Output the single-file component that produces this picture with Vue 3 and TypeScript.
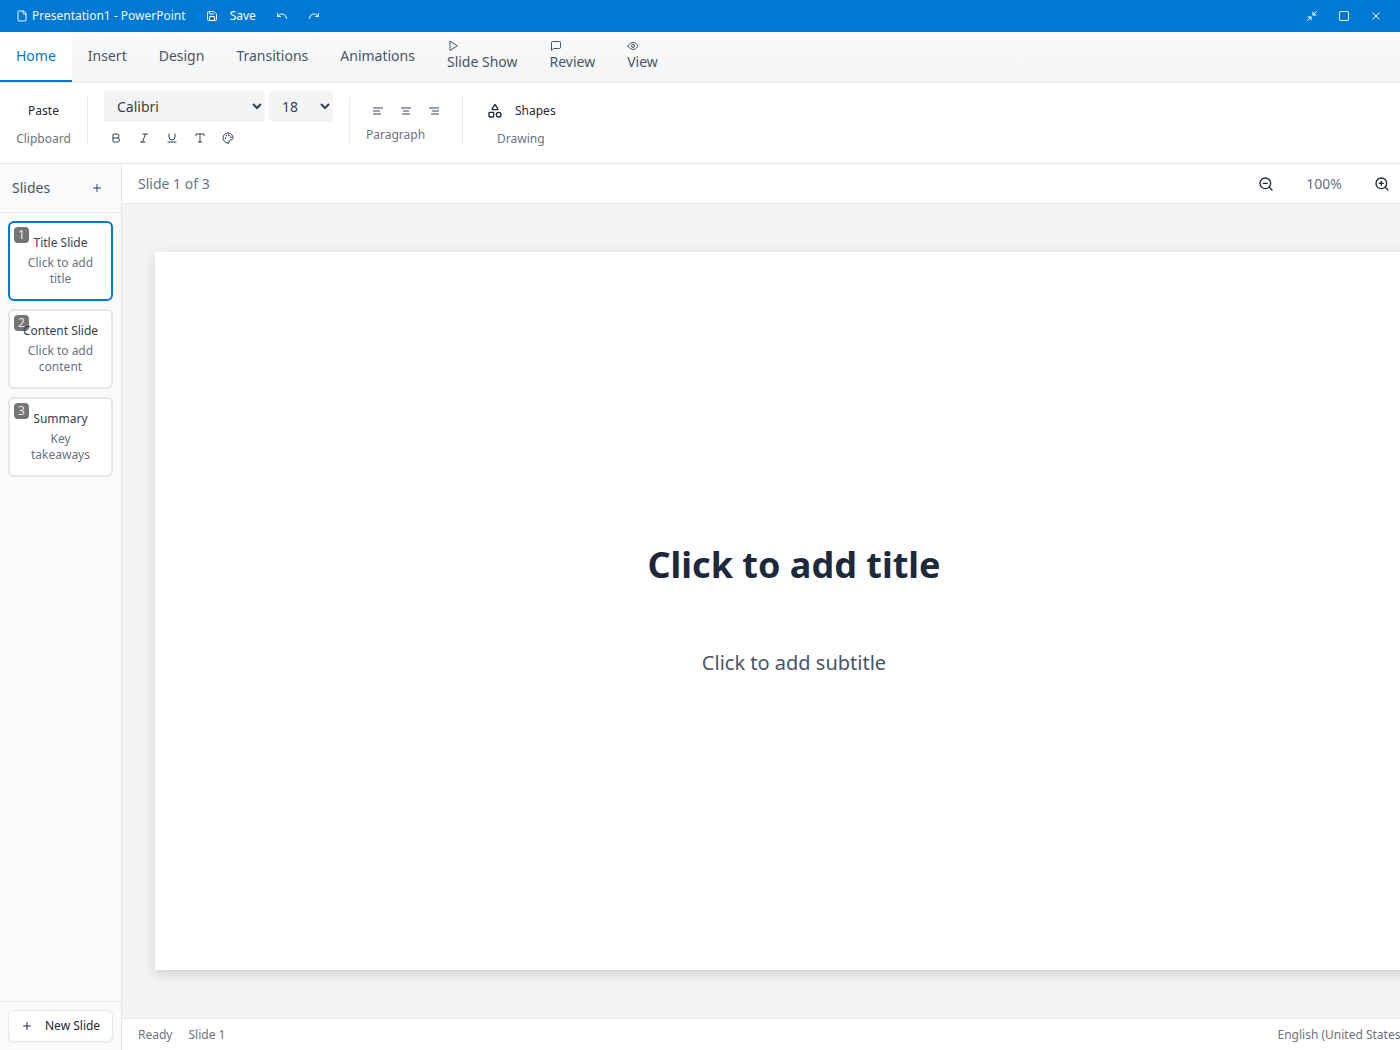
<template>
  <div class="app">
    <header class="titlebar">
      <div class="title-left">
        <span class="doc-title">
          <svg class="ic" viewBox="0 0 24 24"><path d="M15 2H6a2 2 0 0 0-2 2v16a2 2 0 0 0 2 2h12a2 2 0 0 0 2-2V7z" /><path d="M14 2v4a2 2 0 0 0 2 2h4" /></svg>
          <span class="lift">Presentation1 - PowerPoint</span>
        </span>
        <button class="tb-btn save">
          <svg class="ic" viewBox="0 0 24 24"><path d="M15.2 3a2 2 0 0 1 1.4.6l3.8 3.8a2 2 0 0 1 .6 1.4V19a2 2 0 0 1-2 2H5a2 2 0 0 1-2-2V5a2 2 0 0 1 2-2z" /><path d="M17 21v-7a1 1 0 0 0-1-1H8a1 1 0 0 0-1 1v7" /><path d="M7 3v4a1 1 0 0 0 1 1h7" /></svg>
          <span class="lift">Save</span>
        </button>
        <button class="tb-btn">
          <svg class="ic" viewBox="0 0 24 24"><path d="M3 7v6h6" /><path d="M21 17a9 9 0 0 0-9-9 9 9 0 0 0-6 2.3L3 13" /></svg>
        </button>
        <button class="tb-btn">
          <svg class="ic" viewBox="0 0 24 24"><path d="M21 7v6h-6" /><path d="M3 17a9 9 0 0 1 9-9 9 9 0 0 1 6 2.3l3 2.7" /></svg>
        </button>
      </div>
      <div class="title-right">
        <button class="win-btn">
          <svg class="ic" viewBox="0 0 24 24"><path d="m14 10 7-7" /><path d="M20 10h-6V4" /><path d="m3 21 7-7" /><path d="M4 14h6v6" /></svg>
        </button>
        <button class="win-btn">
          <svg class="ic" viewBox="0 0 24 24"><rect x="3" y="3" width="18" height="18" rx="2" /></svg>
        </button>
        <button class="win-btn">
          <svg class="ic" viewBox="0 0 24 24"><path d="M18 6 6 18" /><path d="m6 6 12 12" /></svg>
        </button>
      </div>
    </header>

    <nav class="tabs">
      <button v-for="t in plainTabs" :key="t" :class="['tab', { active: t === activeTab }]">{{ t }}</button>
      <button class="tab">
        <svg class="ic tab-ic" viewBox="0 0 24 24"><path d="M6 3v18l14-9z" /></svg>
        Slide Show
      </button>
      <button class="tab">
        <svg class="ic tab-ic" viewBox="0 0 24 24"><path d="M21 15a2 2 0 0 1-2 2H7l-4 4V5a2 2 0 0 1 2-2h14a2 2 0 0 1 2 2z" /></svg>
        Review
      </button>
      <button class="tab">
        <svg class="ic tab-ic" viewBox="0 0 24 24"><path d="M2 12s3.6-7 10-7 10 7 10 7-3.6 7-10 7-10-7-10-7z" /><circle cx="12" cy="12" r="3" /></svg>
        View
      </button>
    </nav>

    <section class="ribbon">
      <div class="group clip">
        <button class="text-btn">Paste</button>
        <div class="group-label">Clipboard</div>
      </div>
      <div class="group font">
        <div class="selects">
          <select class="sel sel-font"><option>Calibri</option></select>
          <select class="sel sel-size"><option>18</option></select>
        </div>
        <div class="icon-row">
          <button class="icon-btn"><svg class="ic" viewBox="0 0 24 24"><path d="M6 12h9a4 4 0 0 1 0 8H7a1 1 0 0 1-1-1V5a1 1 0 0 1 1-1h7a4 4 0 0 1 0 8" /></svg></button>
          <button class="icon-btn"><svg class="ic" viewBox="0 0 24 24"><line x1="19" y1="4" x2="10" y2="4" /><line x1="14" y1="20" x2="5" y2="20" /><line x1="15" y1="4" x2="9" y2="20" /></svg></button>
          <button class="icon-btn"><svg class="ic" viewBox="0 0 24 24"><path d="M6 4v6a6 6 0 0 0 12 0V4" /><line x1="4" y1="20" x2="20" y2="20" /></svg></button>
          <button class="icon-btn"><svg class="ic" viewBox="0 0 24 24"><path d="M4 7V4h16v3" /><path d="M9 20h6" /><path d="M12 4v16" /></svg></button>
          <button class="icon-btn"><svg class="ic" viewBox="0 0 24 24"><path d="M12 22a10 10 0 1 1 10-10c0 2.8-2.2 4-4 4h-2a2 2 0 0 0-1.5 3.3c.6.8.2 2.7-2.5 2.7z" /><circle cx="13.5" cy="6.5" r=".6" /><circle cx="17.5" cy="10.5" r=".6" /><circle cx="6.5" cy="12.5" r=".6" /><circle cx="8.5" cy="7.5" r=".6" /></svg></button>
        </div>
      </div>
      <div class="group para">
        <div class="icon-row">
          <button class="icon-btn"><svg class="ic" viewBox="0 0 24 24"><path d="M21 6H3" /><path d="M15 12H3" /><path d="M17 18H3" /></svg></button>
          <button class="icon-btn"><svg class="ic" viewBox="0 0 24 24"><path d="M21 6H3" /><path d="M17 12H7" /><path d="M19 18H5" /></svg></button>
          <button class="icon-btn"><svg class="ic" viewBox="0 0 24 24"><path d="M21 6H3" /><path d="M21 12H9" /><path d="M21 18H7" /></svg></button>
        </div>
        <div class="group-label">Paragraph</div>
      </div>
      <div class="group draw">
        <button class="text-btn shapes">
          <svg class="ic" viewBox="0 0 24 24"><path d="M8.3 10a.7.7 0 0 1-.6-1.1l3.7-6a.7.7 0 0 1 1.2 0l3.7 6a.7.7 0 0 1-.6 1.1z" /><rect x="3" y="14" width="7" height="7" rx="1" /><circle cx="17.5" cy="17.5" r="3.5" /></svg>
          <span>Shapes</span>
        </button>
        <div class="group-label">Drawing</div>
      </div>
    </section>

    <div class="body">
      <aside class="sidebar">
        <div class="side-head">
          <span class="lift">Slides</span>
          <button class="add-btn"><svg class="ic" viewBox="0 0 24 24"><path d="M5 12h14" /><path d="M12 5v14" /></svg></button>
        </div>
        <div class="thumbs">
          <div v-for="(s, i) in slides" :key="s.title" :class="['thumb', { selected: i === 0 }]">
            <span class="num">{{ i + 1 }}</span>
            <div class="thumb-title">{{ s.title }}</div>
            <div class="thumb-sub">{{ s.sub }}</div>
          </div>
        </div>
        <div class="side-foot">
          <button class="new-slide">
            <svg class="ic" viewBox="0 0 24 24"><path d="M5 12h14" /><path d="M12 5v14" /></svg>
            <span class="lift">New Slide</span>
          </button>
        </div>
      </aside>

      <main class="main">
        <div class="toolbar">
          <span>Slide 1 of 3</span>
          <div class="zoom">
            <button class="zoom-btn"><svg viewBox="0 0 24 24"><circle cx="11" cy="11" r="8" /><path d="m21 21-4.3-4.3" /><path d="M8 11h6" /></svg></button>
            <span class="zoom-val">100%</span>
            <button class="zoom-btn"><svg viewBox="0 0 24 24"><circle cx="11" cy="11" r="8" /><path d="m21 21-4.3-4.3" /><path d="M11 8v6" /><path d="M8 11h6" /></svg></button>
          </div>
        </div>
        <div class="canvas">
          <div class="slide">
            <h1>Click to add title</h1>
            <p>Click to add subtitle</p>
          </div>
        </div>
        <footer class="status">
          <div class="status-left"><span>Ready</span><span>Slide 1</span></div>
          <span class="lang">English (United States)</span>
        </footer>
      </main>
    </div>
  </div>
</template>

<script setup lang="ts">
const activeTab = 'Home'
const plainTabs = ['Home', 'Insert', 'Design', 'Transitions', 'Animations']
const slides = [
  { title: 'Title Slide', sub: 'Click to add title' },
  { title: 'Content Slide', sub: 'Click to add content' },
  { title: 'Summary', sub: 'Key takeaways' },
]
</script>

<style>
html, body { margin: 0; overflow: hidden; }
</style>

<style scoped>
.app { width: 1400px; height: 1050px; display: flex; flex-direction: column; overflow: hidden; font-family: "Noto Sans", sans-serif; color: #374151; background: #fff; }
button { font-family: inherit; background: none; border: none; padding: 0; color: inherit; }
.ic { width: 12px; height: 12px; fill: none; stroke: currentColor; stroke-width: 2; stroke-linecap: round; stroke-linejoin: round; flex: none; }
.lift { position: relative; top: -1px; }

.titlebar { height: 32px; background: #0078d4; color: #fff; display: flex; justify-content: space-between; align-items: center; padding: 0 8px 0 16px; font-size: 12px; flex: none; }
.title-left { display: flex; align-items: center; }
.doc-title { display: flex; align-items: center; gap: 4px; opacity: 0.95; margin-right: 20px; }
.tb-btn { display: flex; align-items: center; gap: 12px; color: #fff; font-size: 12px; margin-right: 20px; }
.title-right { display: flex; }
.win-btn { width: 32px; height: 32px; display: flex; align-items: center; justify-content: center; color: #fff; }

.tabs { height: 51px; box-sizing: border-box; border-bottom: 1px solid #e5e7eb; display: flex; flex: none; background: linear-gradient(#f9fafb, #f3f4f6); }
.tab { padding: 0 16px 2px; font-size: 14px; color: #4b5563; height: 50px; text-align: left; border-bottom: 2px solid transparent; box-sizing: border-box; }
.tab.active { background: #fff; color: #0078d4; border-bottom-color: #0078d4; }
.tab-ic { display: block; }

.ribbon { height: 81px; box-sizing: border-box; border-bottom: 1px solid #e5e7eb; display: flex; flex: none; align-items: flex-start; padding-top: 14px; }
.group { height: 48px; padding: 0 16px; border-right: 1px solid #e5e7eb; display: flex; flex-direction: column; justify-content: flex-start; align-items: center; flex: none; }
.group.draw { border-right: none; }
.text-btn { font-size: 12px; color: #1f2937; display: block; line-height: 28px; flex: none; }
.group-label { font-size: 12px; color: #6b7280; line-height: 16px; flex: none; }
.clip { width: 55px; }
.clip .group-label, .draw .group-label { margin-top: 6px; }
.draw .group-label { margin-left: -1px; }
.selects { display: flex; gap: 4px; flex: none; margin-top: -6px; }
.sel { height: 31px; border: none; border-radius: 4px; background: #f3f4f6; font-family: inherit; font-size: 14px; color: #374151; padding: 0 9px; }
.sel-font { width: 161px; }
.sel-size { width: 64px; }
.icon-row { display: flex; gap: 4px; flex: none; }
.icon-btn { width: 24px; height: 24px; display: flex; align-items: center; justify-content: center; color: #374151; }
.font { align-items: flex-start; }
.font .icon-row { margin-top: 4px; }
.para { align-items: flex-start; }
.para .icon-row { margin-top: 2px; }
.para .group-label { margin-top: 4px; }
.shapes { display: flex; align-items: center; gap: 12px; padding: 0 8px; }
.shapes .ic { width: 16px; height: 16px; color: #1f2937; }

.body { flex: 1; display: flex; min-height: 0; }
.sidebar { width: 122px; box-sizing: border-box; border-right: 1px solid #e5e7eb; background: #f9fafb; display: flex; flex-direction: column; flex: none; }
.side-head { height: 49px; box-sizing: border-box; border-bottom: 1px solid #e5e7eb; display: flex; align-items: center; justify-content: space-between; padding: 0 12px; font-size: 14px; color: #4b5563; flex: none; }
.add-btn { width: 24px; height: 24px; display: flex; align-items: center; justify-content: center; color: #374151; }
.thumbs { flex: 1; padding: 8px; display: flex; flex-direction: column; gap: 8px; }
.thumb { position: relative; height: 80px; box-sizing: border-box; background: #fff; border: 2px solid #e5e7eb; border-radius: 6px; padding: 12px 12px 0; text-align: center; font-size: 12px; line-height: 16px; }
.thumb.selected { border-color: #0078d4; }
.thumb-title { position: relative; color: #374151; margin: 0 -4px 4px; white-space: nowrap; }
.thumb-sub { color: #6b7280; }
.num { position: absolute; left: 4px; top: 4px; width: 15px; height: 16px; border-radius: 4px; background: #757575; color: rgba(255, 255, 255, 0.85); font-size: 12px; line-height: 16px; text-align: center; }
.side-foot { height: 49px; box-sizing: border-box; border-top: 1px solid #e5e7eb; padding: 8px; flex: none; }
.new-slide { width: 105px; height: 32px; background: #fff; border: 1px solid #e5e7eb; border-radius: 6px; box-shadow: 0 1px 2px rgba(0, 0, 0, 0.05); display: flex; align-items: center; gap: 12px; padding-left: 12px; font-size: 12px; color: #1f2937; box-sizing: border-box; }

.main { flex: 1; min-width: 0; display: flex; flex-direction: column; }
.toolbar { height: 40px; flex: none; box-sizing: border-box; border-bottom: 1px solid #e5e7eb; display: flex; align-items: center; justify-content: space-between; padding: 0 16px; font-size: 14px; color: #6b7280; }
.zoom { display: flex; align-items: center; margin-right: -6px; }
.zoom-btn { width: 16px; height: 16px; display: flex; color: #1f2937; }
.zoom-btn svg { width: 16px; height: 16px; fill: none; stroke: currentColor; stroke-width: 2; stroke-linecap: round; stroke-linejoin: round; }
.zoom-val { width: 100px; text-align: center; }
.canvas { flex: 1; min-height: 0; background: #f3f4f6; overflow: hidden; padding: 48px 0 0 33px; }
.slide { width: 1278px; height: 718px; background: #fff; box-shadow: 0 4px 12px rgba(0, 0, 0, 0.15); display: flex; flex-direction: column; align-items: center; justify-content: center; text-align: center; }
.slide h1 { margin: 0 0 57px; font-size: 36px; line-height: 54px; font-weight: 700; color: #1e293b; }
.slide p { margin: 0 0 7px; font-size: 20px; line-height: 28px; color: #4b5563; }
.status { height: 32px; flex: none; box-sizing: border-box; border-top: 1px solid #e5e7eb; display: flex; align-items: center; justify-content: space-between; padding: 0 0 0 16px; font-size: 12px; color: #6b7280; white-space: nowrap; }
.status-left { display: flex; gap: 16px; }
.lang { margin-right: -4px; }
</style>
